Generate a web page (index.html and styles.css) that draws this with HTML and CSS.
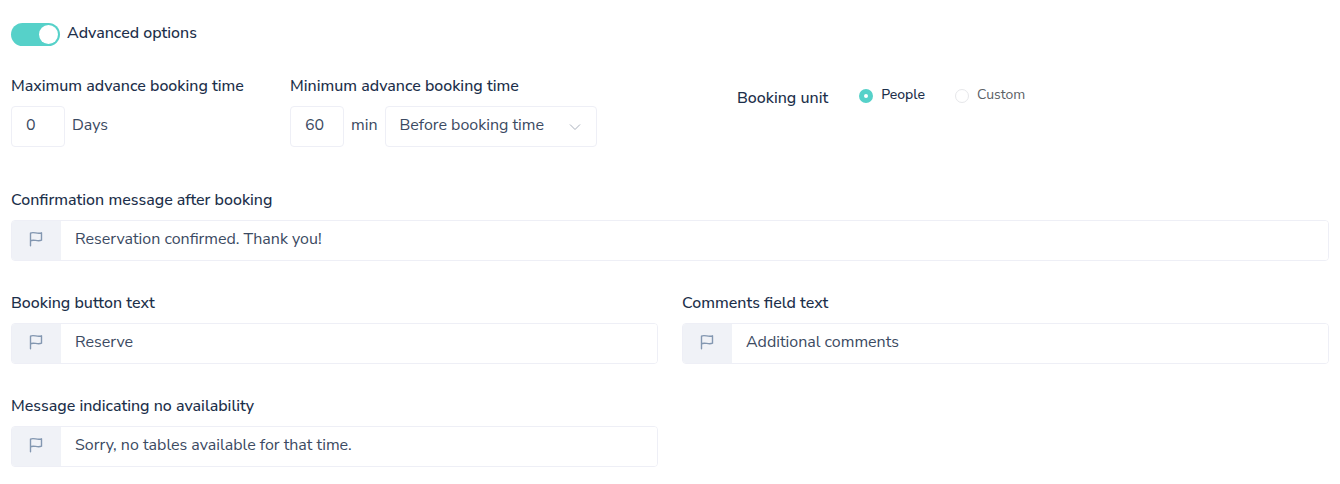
FILE: index.html
```html
<!DOCTYPE html>
<html lang="en">
<head>
    <meta charset="UTF-8">
    <meta name="viewport" content="width=device-width, initial-scale=1.0">
    <title>Advanced options</title>
    <link rel="stylesheet" href="styles.css">
</head>
<body>
    <svg class="sprite" aria-hidden="true">
        <symbol id="flag" viewBox="0 0 14 16">
            <path d="M1.5 14.7V2.2C4.5 0.2 8.5 3.6 12.5 1.8V9.2C8.5 11 4.5 7.8 1.5 9.8"/>
        </symbol>
    </svg>
    <form class="options">
        <label class="switch">
            <input type="checkbox" name="advanced" checked>
            <span>Advanced options</span>
        </label>

        <div class="timing">
            <div class="field">
                <label for="maxTime">Maximum advance booking time</label>
                <div class="inline">
                    <input type="text" class="box number" id="maxTime" value="0">
                    <span>Days</span>
                </div>
            </div>
            <div class="field">
                <label for="minTime">Minimum advance booking time</label>
                <div class="inline">
                    <input type="text" class="box number" id="minTime" value="60">
                    <span>min</span>
                    <div class="select">
                        <select class="box" aria-label="Minimum time reference">
                            <option>Before booking time</option>
                        </select>
                        <svg class="chevron" viewBox="0 0 12 8" aria-hidden="true"><path d="M1 1.5L6 6.5L11 1.5"/></svg>
                    </div>
                </div>
            </div>
            <div class="unit" role="radiogroup" aria-labelledby="unitLabel">
                <span class="unit-label" id="unitLabel">Booking unit</span>
                <label class="radio"><input type="radio" name="unit" checked><span>People</span></label>
                <label class="radio"><input type="radio" name="unit"><span>Custom</span></label>
            </div>
        </div>

        <div class="texts">
            <div class="field wide">
                <label for="confirmation">Confirmation message after booking</label>
                <div class="group">
                    <span class="addon"><svg class="flag"><use href="#flag"/></svg></span>
                    <input type="text" id="confirmation" value="Reservation confirmed. Thank you!">
                </div>
            </div>
            <div class="field">
                <label for="buttonText">Booking button text</label>
                <div class="group">
                    <span class="addon"><svg class="flag"><use href="#flag"/></svg></span>
                    <input type="text" id="buttonText" value="Reserve">
                </div>
            </div>
            <div class="field">
                <label for="comments">Comments field text</label>
                <div class="group">
                    <span class="addon"><svg class="flag"><use href="#flag"/></svg></span>
                    <input type="text" id="comments" value="Additional comments">
                </div>
            </div>
            <div class="field">
                <label for="unavailable">Message indicating no availability</label>
                <div class="group">
                    <span class="addon"><svg class="flag"><use href="#flag"/></svg></span>
                    <input type="text" id="unavailable" value="Sorry, no tables available for that time.">
                </div>
            </div>
        </div>
    </form>
</body>
</html>
```
FILE: styles.css
```css
* {
    box-sizing: border-box;
}
body {
    margin: 0;
    background: #fff;
    color: #1c2f4a;
    font-family: Avenir, "Nunito Sans", Lato, sans-serif;
    font-size: 16px;
    line-height: 24px;
}
input, select {
    margin: 0;
    font: inherit;
    color: #3b4a62;
}
.sprite {
    display: none;
}
.options {
    padding: 21px 11px;
}

/* Switch */
.switch {
    display: flex;
    gap: 7px;
}
.switch input {
    appearance: none;
    width: 49px;
    height: 23px;
    margin-top: 2px;
    padding: 2px;
    border-radius: 12px;
    background: #56d1c9;
}
.switch input::before {
    content: "";
    display: block;
    width: 19px;
    height: 19px;
    border-radius: 50%;
    background: #fff;
}
.switch input:checked::before {
    margin-left: auto;
}
.switch, .field > label, .unit-label {
    font-weight: 500;
}

/* Fields */
.timing {
    display: grid;
    grid-template-columns: 279fr 447fr 592fr;
    margin: 28px 0 41px;
}
.field {
    display: flex;
    flex-direction: column;
    gap: 8px;
}
.inline {
    display: flex;
    align-items: center;
    gap: 7px;
    color: #3b4a62;
}
.inline > span {
    padding-bottom: 4px;
}
.box {
    height: 41px;
    padding: 0 14px 4px;
    border: 1px solid #eeeff6;
    border-radius: 4px;
    background: #fff;
}
.number {
    width: 54px;
}
.select {
    display: grid;
    align-items: center;
}
.select > * {
    grid-area: 1 / 1;
}
.select select {
    appearance: none;
    width: 212px;
}
.chevron {
    justify-self: end;
    width: 12px;
    height: 8px;
    margin-right: 16px;
    fill: none;
    stroke: #a9b0bc;
    pointer-events: none;
}

/* Booking unit */
.unit {
    display: flex;
    align-items: flex-start;
    padding-top: 9px;
}
.unit-label {
    padding-top: 3px;
    margin-right: 31px;
}
.radio {
    display: flex;
    gap: 8px;
    margin-right: 30px;
    color: #5c5f66;
    font-size: 14px;
}
.radio:has(:checked) {
    color: #1c2f4a;
    font-weight: 500;
}
.radio input {
    appearance: none;
    width: 14px;
    height: 14px;
    margin-top: 6px;
    border: 1px solid #e6e7ea;
    border-radius: 50%;
}
.radio input:checked {
    border: 5px solid #56d1c9;
}

/* Text inputs */
.texts {
    display: grid;
    grid-template-columns: 1fr 1fr;
    gap: 30px 24px;
}
.wide {
    grid-column: 1 / -1;
}
.group {
    display: flex;
    height: 41px;
    border: 1px solid #eeeff6;
    border-radius: 4px;
    overflow: hidden;
}
.addon {
    display: flex;
    align-items: center;
    justify-content: center;
    width: 49px;
    padding: 0 2px 4px 0;
    background: #f0f2f7;
}
.flag {
    width: 14px;
    height: 16px;
    fill: none;
    stroke: #8397b1;
    stroke-width: 1.4;
    stroke-linecap: round;
    stroke-linejoin: round;
}
.group input {
    flex: 1;
    min-width: 0;
    padding: 0 14px 4px;
    border: 0;
    background: #fff;
}
```
